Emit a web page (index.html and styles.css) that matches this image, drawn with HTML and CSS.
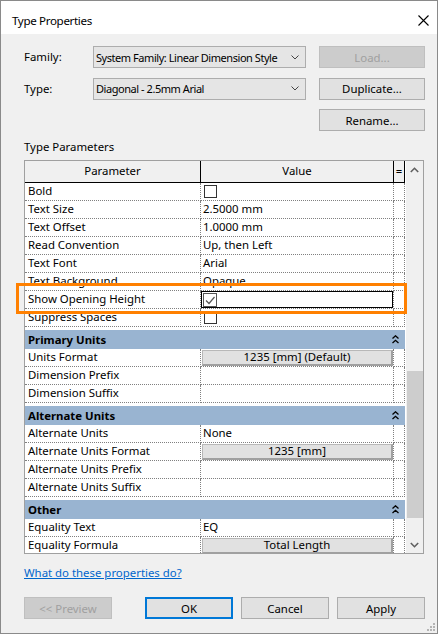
FILE: index.html
```html
<!DOCTYPE html>
<html lang="en">
<head>
  <meta charset="UTF-8" />
  <title>Type Properties</title>
  <link rel="stylesheet" href="styles.css">
</head>
<body>

<div class="window">
  <div class="titlebar">
    <span class="title">Type Properties</span>
    <svg class="close" width="11" height="11" viewBox="0 0 11 11"><path d="M0.5 0.5L10.5 10.5M10.5 0.5L0.5 10.5" stroke="#000" stroke-width="1.1" fill="none"/></svg>
  </div>

  <div class="content">
    <div class="type-form">
      <div class="label">Family:</div>
      <div class="combo">
        <span>System Family: Linear Dimension Style</span>
        <svg width="8" height="5" viewBox="0 0 8 5"><path d="M0.5 0.5L4 4L7.5 0.5" stroke="#444" fill="none"/></svg>
      </div>
      <button class="btn" disabled>Load...</button>

      <div class="label">Type:</div>
      <div class="combo">
        <span>Diagonal - 2.5mm Arial</span>
        <svg width="8" height="5" viewBox="0 0 8 5"><path d="M0.5 0.5L4 4L7.5 0.5" stroke="#444" fill="none"/></svg>
      </div>
      <button class="btn">Duplicate...</button>

      <div></div>
      <div></div>
      <button class="btn">Rename...</button>
    </div>

    <div class="section-label">Type Parameters</div>

    <div class="prop-grid">
      <div class="rows">
        <div class="row head">
          <div class="c1">Parameter</div>
          <div class="c2">Value</div>
          <div class="c3">=</div>
        </div>

        <div class="row"><div class="c1">Bold</div><div class="c2"><span class="check"></span></div><div class="c3"></div></div>
        <div class="row"><div class="c1">Text Size</div><div class="c2">2.5000 mm</div><div class="c3"></div></div>
        <div class="row"><div class="c1">Text Offset</div><div class="c2">1.0000 mm</div><div class="c3"></div></div>
        <div class="row"><div class="c1">Read Convention</div><div class="c2">Up, then Left</div><div class="c3"></div></div>
        <div class="row"><div class="c1">Text Font</div><div class="c2">Arial</div><div class="c3"></div></div>
        <div class="row"><div class="c1">Text Background</div><div class="c2">Opaque</div><div class="c3"></div></div>
        <div class="row"><div class="c1">Show Opening Height</div>
          <div class="c2 editing">
            <span class="check checked">
              <svg width="12" height="12" viewBox="0 0 12 12"><path d="M2 6.5L5 9.5L10.5 3" stroke="#555" stroke-width="1.2" fill="none"/></svg>
            </span>
          </div>
          <div class="c3"></div></div>
        <div class="row"><div class="c1">Suppress Spaces</div><div class="c2"><span class="check"></span></div><div class="c3"></div></div>

        <div class="group">
          <div class="group-bar">
            <span>Primary Units</span>
            <svg width="7" height="9" viewBox="0 0 7 9"><path d="M0.5 3.5L3.5 0.8L6.5 3.5M0.5 8L3.5 5.3L6.5 8" stroke="#000" stroke-width="1.3" fill="none"/></svg>
          </div>
        </div>
        <div class="row"><div class="c1">Units Format</div><div class="c2"><div class="cell-btn">1235 [mm] (Default)</div></div><div class="c3"></div></div>
        <div class="row"><div class="c1">Dimension Prefix</div><div class="c2"></div><div class="c3"></div></div>
        <div class="row"><div class="c1">Dimension Suffix</div><div class="c2"></div><div class="c3"></div></div>

        <div class="group">
          <div class="group-bar">
            <span>Alternate Units</span>
            <svg width="7" height="9" viewBox="0 0 7 9"><path d="M0.5 3.5L3.5 0.8L6.5 3.5M0.5 8L3.5 5.3L6.5 8" stroke="#000" stroke-width="1.3" fill="none"/></svg>
          </div>
        </div>
        <div class="row"><div class="c1">Alternate Units</div><div class="c2">None</div><div class="c3"></div></div>
        <div class="row"><div class="c1">Alternate Units Format</div><div class="c2"><div class="cell-btn">1235 [mm]</div></div><div class="c3"></div></div>
        <div class="row"><div class="c1">Alternate Units Prefix</div><div class="c2"></div><div class="c3"></div></div>
        <div class="row"><div class="c1">Alternate Units Suffix</div><div class="c2"></div><div class="c3"></div></div>

        <div class="group">
          <div class="group-bar">
            <span>Other</span>
            <svg width="7" height="9" viewBox="0 0 7 9"><path d="M0.5 3.5L3.5 0.8L6.5 3.5M0.5 8L3.5 5.3L6.5 8" stroke="#000" stroke-width="1.3" fill="none"/></svg>
          </div>
        </div>
        <div class="row"><div class="c1">Equality Text</div><div class="c2">EQ</div><div class="c3"></div></div>
        <div class="row"><div class="c1">Equality Formula</div><div class="c2"><div class="cell-btn">Total Length</div></div><div class="c3"></div></div>
      </div>

      <div class="scrollbar">
        <div class="arrow">
          <svg width="9" height="6" viewBox="0 0 9 6"><path d="M0.8 5L4.5 1.3L8.2 5" stroke="#606060" stroke-width="1.6" fill="none"/></svg>
        </div>
        <div class="track-top"></div>
        <div class="thumb"></div>
        <div class="track-bottom"></div>
        <div class="arrow">
          <svg width="9" height="6" viewBox="0 0 9 6"><path d="M0.8 1L4.5 4.7L8.2 1" stroke="#606060" stroke-width="1.6" fill="none"/></svg>
        </div>
      </div>
    </div>

    <a class="help" href="#">What do these properties do?</a>

    <div class="footer">
      <button class="btn wide" disabled>&lt;&lt; Preview</button>
      <div class="actions">
        <button class="btn wide default">OK</button>
        <button class="btn wide">Cancel</button>
        <button class="btn wide">Apply</button>
      </div>
    </div>
  </div>

  <div class="highlight"></div>

  <svg class="grip" width="8" height="8" viewBox="0 0 8 8" fill="#b4b4b4">
    <rect x="6" y="0" width="2" height="2"/>
    <rect x="3" y="3" width="2" height="2"/><rect x="6" y="3" width="2" height="2"/>
    <rect x="0" y="6" width="2" height="2"/><rect x="3" y="6" width="2" height="2"/><rect x="6" y="6" width="2" height="2"/>
  </svg>
</div>

</body>
</html>
```

FILE: styles.css
```css
* {
  box-sizing: border-box;
}

body {
  margin: 0;
  background: #fff;
  font-family: "Noto Sans", "Open Sans", sans-serif;
  font-size: 11.4px;
  color: #000;
}

.window {
  position: relative;
  width: 438px;
  height: 634px;
  border: 1px solid #8a8a8a;
  background: #f0f0f0;
}

.titlebar {
  height: 33px;
  background: #fff;
  display: flex;
  align-items: center;
  justify-content: space-between;
  padding: 5px 8px 0 11px;
}

.title {
  font-size: 11.6px;
  letter-spacing: -0.35px;
}

.content {
  padding: 12px 12px 0 23px;
}

/* family / type block */
.type-form {
  display: grid;
  grid-template-columns: 69px 226px 106px;
  grid-template-rows: 22px 22px 22px;
  row-gap: 9.5px;
  align-items: center;
}

.label {
  line-height: 22px;
}

.combo {
  width: 213px;
  height: 22px;
  border: 1px solid #adadad;
  background: #e5e5e5;
  display: flex;
  align-items: center;
  justify-content: space-between;
  padding: 0 6px 0 2px;
  white-space: nowrap;
}

.combo span {
  flex: 1;
  min-width: 0;
  overflow: hidden;
  font-size: 11px;
  letter-spacing: -0.45px;
}

.combo svg {
  flex-shrink: 0;
}

.btn {
  height: 22px;
  border: 1px solid #adadad;
  background: #e1e1e1;
  font-family: inherit;
  font-size: 11.4px;
  color: #000;
  padding: 0;
}

.btn:disabled {
  background: #cccccc;
  border-color: #bfbfbf;
  color: #a0a0a0;
}

.section-label {
  margin-top: 8px;
  line-height: 16px;
  height: 21px;
}

/* property grid */
.prop-grid {
  display: flex;
  width: 400px;
  height: 394px;
  border: 1px solid #a0a0a0;
  background: #fff;
}

.rows {
  width: 380px;
  overflow: hidden;
}

.row {
  display: grid;
  grid-template-columns: 176px 193px 11px;
  height: 18px;
  line-height: 16px;
}

.row > div {
  border-right: 1px dotted #808080;
  border-bottom: 1px dotted #808080;
  white-space: nowrap;
  overflow: hidden;
}

.c1 {
  padding-left: 3px;
}

.c2 {
  padding-left: 2px;
}

.row.head {
  height: 22px;
  line-height: 20px;
  background: #f0f0f0;
}

.row.head > div {
  border-right: 1px solid #000;
  border-bottom: 1px solid #000;
  text-align: center;
  padding: 0;
}

.check {
  display: block;
  width: 13px;
  height: 13px;
  margin: 2px 0 0 1px;
  border: 1px solid #333;
  background: #fff;
}

.c2.editing {
  box-shadow: inset 0 0 0 1px #000;
  padding-left: 1px;
}

.check.checked {
  width: 14px;
  height: 14px;
  border-color: #555;
  margin-top: 2px;
}

.check svg {
  display: block;
}

.cell-btn {
  height: 16px;
  margin: 1px 0 0 -1px;
  background: #e1e1e1;
  border: 1px solid #b8b8b8;
  border-right: 2px solid #a0a0a0;
  border-bottom: 2px solid #a0a0a0;
  text-align: center;
  line-height: 12px;
}

.group {
  height: 22px;
  padding-top: 3px;
}

.group-bar {
  height: 19px;
  background: #99b4d1;
  display: flex;
  align-items: center;
  justify-content: space-between;
  padding: 0 6px 1px 3px;
  font-weight: bold;
}

.scrollbar {
  width: 18px;
  display: flex;
  flex-direction: column;
  background: #f0f0f0;
  border-left: 1px solid #fff;
}

.arrow {
  height: 17px;
  display: flex;
  align-items: center;
  justify-content: center;
}

.track-top {
  height: 193px;
}

.thumb {
  height: 147px;
  margin-left: 1px;
  background: #cdcdcd;
}

.track-bottom {
  flex: 1;
}

.help {
  display: block;
  width: max-content;
  margin-top: 11px;
  line-height: 16px;
  color: #0066cc;
}

.footer {
  display: flex;
  margin-top: 16px;
}

.actions {
  margin-left: auto;
  display: flex;
  gap: 8px;
}

.btn.wide {
  width: 88px;
}

.btn.default {
  border: 2px solid #0078d7;
}

/* annotation box */
.highlight {
  position: absolute;
  left: 15px;
  top: 282px;
  width: 391px;
  height: 31px;
  border: 3px solid #ff8000;
}

.grip {
  position: absolute;
  right: 2px;
  bottom: 2px;
}
```
